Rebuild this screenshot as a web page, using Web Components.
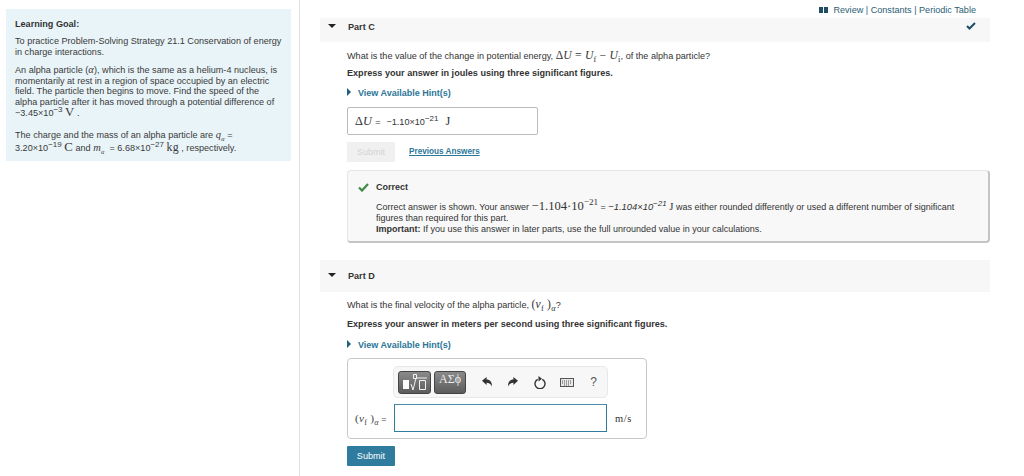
<!DOCTYPE html>
<html>
<head>
<meta charset="utf-8">
<title>Part C and D</title>
<style>
  html, body { margin: 0; background: #fff; }
  body { font: 9.1px/10px "Liberation Sans", Arial, sans-serif; color: #333; overflow: hidden; }
</style>
</head>
<body>
<mp-page></mp-page>

<script>
const mathCss = `
  .m { font-family: "Liberation Serif", serif; font-size: 1.25em; letter-spacing: .2px; }
  .m i { font-style: italic; }
  sup, sub { font-size: 72%; line-height: 0; }
`

class GoalPanel extends HTMLElement {
  constructor () {
    super()
    this.attachShadow({ mode: 'open' })
    this.shadowRoot.innerHTML = `
      <style>
        :host { display: block; background: #e9f4f8; margin: 9px 8px 0 6px; padding: 10px 9px 9px 9px; height: 133px; color: #3a3a3a; }
        ${mathCss}
        h4 { margin: 0 0 7px; font-size: 9.1px; line-height: 10px; font-weight: bold; color: #333; }
        p { margin: 0 0 8px; line-height: 10.5px; }
        p.last { line-height: 12px; margin-top: 10px; }
        sup { font-size: 88%; }
        .m { font-size: 1.4em; }
        .m sub { font-size: 60%; }
        .m.kg { font-size: 1.3em; }
        .m.s { font-size: 1.15em; }
      </style>
      <h4>Learning Goal:</h4>
      <p>To practice Problem-Solving Strategy 21.1 Conservation of energy<br>in charge interactions.</p>
      <p>An alpha particle (<span class="m s"><i>&alpha;</i></span>), which is the same as a helium-4 nucleus, is<br>momentarily at rest in a region of space occupied by an electric<br>field. The particle then begins to move. Find the speed of the<br>alpha particle after it has moved through a potential difference of<br>&minus;3.45&times;10<sup>&minus;3</sup> <span class="m">V</span> .</p>
      <p class="last">The charge and the mass of an alpha particle are <span class="m s"><i>q</i><sub><i>&alpha;</i></sub></span> =<br>3.20&times;10<sup>&minus;19</sup> <span class="m">C</span> and <span class="m s"><i>m</i><sub><i>&alpha;</i></sub></span> &nbsp;= 6.68&times;10<sup>&minus;27</sup> <span class="m kg">kg</span> , respectively.</p>
    `
  }
}

class TopLinks extends HTMLElement {
  constructor () {
    super()
    this.attachShadow({ mode: 'open' })
    this.shadowRoot.innerHTML = `
      <style>
        :host { display: flex; justify-content: flex-end; align-items: center; height: 18px; padding: 2px 14px 0 0; box-sizing: border-box; color: #2b5d73; gap: 5px; }
        svg { display: block; }
      </style>
      <svg width="9" height="6" viewBox="0 0 9 6"><path fill="#1f4d66" d="M0 0h4v6H0zM5 0h4v6H5z"/></svg>
      <span>Review | Constants | Periodic Table</span>
    `
  }
}

class PartHeader extends HTMLElement {
  constructor () {
    super()
    this.attachShadow({ mode: 'open' })
    this.shadowRoot.innerHTML = `
      <style>
        :host { display: flex; align-items: flex-start; height: 24px; background: #f7f7f7; box-sizing: border-box; padding: 4px 14px 0 8px; font-weight: bold; color: #333; line-height: 10px; }
        :host([tall]) { height: 32px; padding-top: 11px; }
        .arrow { width: 0; height: 0; border: 4px solid transparent; border-top: 4px solid #222; border-bottom: 0; margin: 2px 12px 0 0; }
        .check { margin-left: auto; color: #1f4d66; }
      </style>
      <span class="arrow"></span>
      <slot></slot>
      <span class="check"><slot name="status"></slot></span>
    `
  }
}

class HintLink extends HTMLElement {
  constructor () {
    super()
    this.attachShadow({ mode: 'open' })
    this.shadowRoot.innerHTML = `
      <style>
        :host { display: flex; align-items: center; gap: 7px; height: 10px; color: #2d7698; font-weight: bold; font-size: 9px; }
        .tri { width: 0; height: 0; margin-bottom: 2px; border: 4px solid transparent; border-left: 4px solid #1f5f80; border-right: 0; }
      </style>
      <span class="tri"></span><span>View Available Hint(s)</span>
    `
  }
}

class SubmitButton extends HTMLElement {
  constructor () {
    super()
    this.attachShadow({ mode: 'open' })
    this.shadowRoot.innerHTML = `
      <style>
        :host { display: flex; align-items: center; justify-content: center; width: 48px; height: 20px; background: #2f7c9e; color: #fff; border-radius: 1px; }
        :host([disabled]) { background: #f0f0f0; color: #d4d4d4; }
      </style>
      <slot></slot>
    `
  }
}

class FeedbackBox extends HTMLElement {
  constructor () {
    super()
    this.attachShadow({ mode: 'open' })
    this.shadowRoot.innerHTML = `
      <style>
        :host { display: block; height: 73px; box-sizing: border-box; margin-top: 8px; background: #f8f8f8; border: 1px solid #e6e6e6; border-right: 2px solid #c4c4c4; border-bottom: 2px solid #c4c4c4; border-radius: 4px; padding: 11px 0 0 10px; color: #333; font-size: 9px; }
        ${mathCss}
        .head { display: flex; align-items: center; gap: 7px; height: 10px; font-weight: bold; }
        svg { display: block; }
        p { margin: 9px 0 0 18px; line-height: 10.8px; }
        .m { font-size: 1.4em; letter-spacing: 0; }
        em { font-size: 9.4px; }
        em sup { font-size: 85%; }
      </style>
      <div class="head">
        <svg width="11" height="9" viewBox="0 0 11 9"><path fill="none" stroke="#3d8a46" stroke-width="2.2" d="M1 4.5l3 3 6-6.500"/></svg>
        <span>Correct</span>
      </div>
      <p>Correct answer is shown. Your answer <span class="m">&minus;1.104&middot;10<sup>&minus;21</sup></span> = <em>&minus;1.104&times;10<sup>&minus;21</sup></em> <span class="m" style="font-size:1.2em">J</span> was either rounded differently or used a different number of significant<br>figures than required for this part.<br><b>Important:</b> If you use this answer in later parts, use the full unrounded value in your calculations.</p>
    `
  }
}

class MathToolbar extends HTMLElement {
  constructor () {
    super()
    this.attachShadow({ mode: 'open' })
    this.shadowRoot.innerHTML = `
      <style>
        :host { display: flex; align-items: center; width: 215px; height: 32px; box-sizing: border-box; background: #f7f7f7; border: 1px solid #e8e8e8; border-radius: 5px; padding: 0 0 0 4px; }
        .tpl { width: 33px; height: 23px; box-sizing: border-box; border: 1px solid #444; border-radius: 3px; background: linear-gradient(#8a8a8a, #5c5c5c); color: #eee; display: flex; align-items: center; justify-content: center; font: 12px/1 "Liberation Serif", serif; margin-right: 3px; }
        .tpl + .tpl { padding-bottom: 7px; }
        svg { display: block; }
        .ic { width: 27px; display: flex; justify-content: center; }
        .q { color: #555; font-size: 12px; }
      </style>
      <span class="tpl">
        <svg width="27" height="17" viewBox="0 0 27 17"><path fill="#fff" d="M2 6h6v9H2z"/><path fill="none" stroke="#f2f2f2" d="M12.500 .5h3v4h-3zM10 10l2 6 3-12h11M18.500 6.500h6v9h-6z"/></svg>
      </span>
      <span class="tpl">&Alpha;&Sigma;&#981;</span>
      <span class="ic" style="margin-left:4px"><svg width="10" height="10" viewBox="0 0 12 12"><path fill="#333" d="M0 4.500L5.500 0v3c4 0 6.500 2.500 6.500 8.500C10.500 8.500 8.500 7 5.500 7v2.500z"/></svg></span>
      <span class="ic"><svg width="10" height="10" viewBox="0 0 12 12"><path fill="#333" d="M12 4.500L6.500 0v3C2.500 3 0 5.500 0 11.500 1.500 8.500 3.500 7 6.500 7v2.500z"/></svg></span>
      <span class="ic"><svg width="12" height="13" viewBox="0 0 12 13"><path fill="none" stroke="#333" stroke-width="1.4" d="M3.700 3.300a5 5 0 1 0 4.600 0"/><path fill="#333" d="M4.500 0v5.500L8 2.700z"/></svg></span>
      <span class="ic"><svg width="14" height="9" viewBox="0 0 14 9"><rect x=".5" y=".5" width="13" height="8" fill="#e8e8e8" stroke="#555"/><path stroke="#555" stroke-dasharray="1 1" d="M2 3h10M2 5h10M4 7h6"/></svg></span>
      <span class="ic q">?</span>
    `
  }
}

class AnswerBox extends HTMLElement {
  constructor () {
    super()
    this.attachShadow({ mode: 'open' })
    this.shadowRoot.innerHTML = `
      <style>
        :host { display: block; width: 300px; height: 81px; box-sizing: border-box; border: 1px solid #c8c8c8; border-radius: 4px; padding: 7px 0 0 45px; }
        ${mathCss}
        .row { display: flex; align-items: center; margin: 6px 0 0 -38px; }
        .label { width: 39px; white-space: nowrap; color: #444; }
        .field { width: 213px; height: 28px; box-sizing: border-box; border: 1px solid #2f7c9e; border-top-color: #4a8dab; background: #fff; }
        .unit { margin-left: 8px; font: 10.5px "Liberation Serif", serif; letter-spacing: .6px; color: #333; }
      </style>
      <math-toolbar></math-toolbar>
      <div class="row">
        <span class="label"><span class="m">(<i>v</i><sub>f</sub> )<sub><i>&alpha;</i></sub></span> =</span>
        <div class="field"></div>
        <span class="unit">m/s</span>
      </div>
    `
  }
}

class MpPage extends HTMLElement {
  constructor () {
    super()
    this.attachShadow({ mode: 'open' })
    this.shadowRoot.innerHTML = `
      <style>
        :host { display: grid; grid-template-columns: 300px 1fr; height: 476px; overflow: hidden; }
        ${mathCss}
        aside { border-right: 1px solid #e2e2e2; }
        main { padding: 0 34px 0 20px; }
        .body { padding-left: 27px; }
        .q { margin: 9px 0 0; height: 10px; line-height: 10px; white-space: nowrap; }
        .x { margin: 7px 0 0; line-height: 10px; font-weight: bold; }
        .q .m { font-size: 1.28em; letter-spacing: .2px; }
        hint-link { margin-top: 10px; }
        .given { width: 191px; height: 28px; box-sizing: border-box; margin-top: 9px; border: 1px solid #bbb; border-radius: 2px; padding-left: 7px; line-height: 26px; white-space: nowrap; word-spacing: 1px; }
        .given .m { font-size: 1.35em; }
        .given sup { font-size: 88%; }
        .given .eq { margin: 0 6px 0 3px; }
        .given .u { margin-left: 7px; }
        .actions { display: flex; align-items: flex-start; margin-top: 7px; gap: 14px; }
        .actions a { color: #2d7698; font-weight: bold; font-size: 8.2px; text-decoration: underline; margin-top: 5px; }
        part-header[tall] { margin-top: 17px; }
        .b2 .q { margin-top: 8px; }
        .b2 .x { margin-top: 9px; }
        .b2 hint-link { margin-top: 11px; }
        answer-box { margin-top: 8px; }
        .b2 submit-button { margin-top: 7px; }
        svg { display: block; }
      </style>
      <aside><goal-panel></goal-panel></aside>
      <main>
        <top-links></top-links>
        <part-header>Part C<svg slot="status" width="10" height="8" viewBox="0 0 10 8"><path fill="none" stroke="#1f4d66" stroke-width="2" d="M1 4l2.500 2.500L9 1"/></svg></part-header>
        <div class="body">
          <p class="q">What is the value of the change in potential energy, <span class="m">&Delta;<i>U</i> = <i>U</i><sub>f</sub> &minus; <i>U</i><sub>i</sub></span>, of the alpha particle?</p>
          <p class="x">Express your answer in joules using three significant figures.</p>
          <hint-link></hint-link>
          <div class="given"><span class="m">&Delta;<i>U</i></span><span class="eq">=</span>&minus;1.10&times;10<sup>&minus;21</sup><span class="m u">J</span></div>
          <div class="actions"><submit-button disabled>Submit</submit-button><a>Previous Answers</a></div>
          <feedback-box></feedback-box>
        </div>
        <part-header tall>Part D</part-header>
        <div class="body b2">
          <p class="q">What is the final velocity of the alpha particle, <span class="m">(<i>v</i><sub>f</sub> )<sub><i>&alpha;</i></sub></span>?</p>
          <p class="x">Express your answer in meters per second using three significant figures.</p>
          <hint-link></hint-link>
          <answer-box></answer-box>
          <submit-button>Submit</submit-button>
        </div>
      </main>
    `
  }
}

customElements.define('goal-panel', GoalPanel)
customElements.define('top-links', TopLinks)
customElements.define('part-header', PartHeader)
customElements.define('hint-link', HintLink)
customElements.define('submit-button', SubmitButton)
customElements.define('feedback-box', FeedbackBox)
customElements.define('math-toolbar', MathToolbar)
customElements.define('answer-box', AnswerBox)
customElements.define('mp-page', MpPage)
</script>
</body>
</html>
